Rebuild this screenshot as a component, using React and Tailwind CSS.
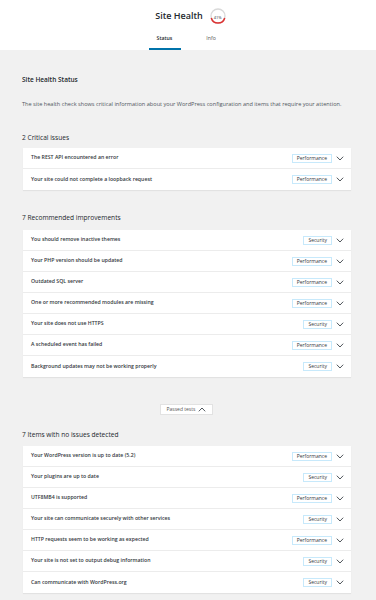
import React from "react";

const critical = [
  ["The REST API encountered an error", "Performance"],
  ["Your site could not complete a loopback request", "Performance"],
];

const recommended = [
  ["You should remove inactive themes", "Security"],
  ["Your PHP version should be updated", "Performance"],
  ["Outdated SQL server", "Performance"],
  ["One or more recommended modules are missing", "Performance"],
  ["Your site does not use HTTPS", "Security"],
  ["A scheduled event has failed", "Performance"],
  ["Background updates may not be working properly", "Security"],
];

const passed = [
  ["Your WordPress version is up to date (5.2)", "Performance"],
  ["Your plugins are up to date", "Security"],
  ["UTF8MB4 is supported", "Performance"],
  ["Your site can communicate securely with other services", "Security"],
  ["HTTP requests seem to be working as expected", "Performance"],
  ["Your site is not set to output debug information", "Security"],
  ["Can communicate with WordPress.org", "Security"],
];

function Chevron({ up = false }) {
  return (
    <svg width="8" height="5" viewBox="0 0 8 5" className="shrink-0">
      <path
        d={up ? "M0.8 4.3 L4 1 L7.2 4.3" : "M0.8 0.7 L4 4 L7.2 0.7"}
        fill="none"
        stroke="#3c434a"
        strokeWidth="0.9"
      />
    </svg>
  );
}

function Card({ items }) {
  return (
    <div className="ml-px bg-white shadow-[0_1px_1px_rgba(0,0,0,0.06)]">
      {items.map(([title, badge], i) => (
        <div
          key={title}
          className={`h-[21px] flex items-center pl-[8px] pr-[7px] ${
            i < items.length - 1 ? "border-b border-[#ececec]" : ""
          }`}
        >
          <span className="flex-1 text-[5.2px] font-semibold text-[#32373c] leading-none">{title}</span>
          <span className="h-[9px] px-[4px] flex items-center border border-[#c7e9fb] text-[5px] text-[#32373c] leading-none">
            {badge}
          </span>
          <span className="ml-[4px]">
            <Chevron />
          </span>
        </div>
      ))}
    </div>
  );
}

function Heading({ children, className = "" }) {
  return (
    <h2 className={`h-[10px] leading-[10px] text-[6.6px] text-[#23282d] ${className}`}>{children}</h2>
  );
}

export default function App() {
  return (
    <div className="w-[376px] min-h-[600px] bg-[#f1f1f1] font-['Open_Sans',sans-serif] text-[#23282d]">
      {/* HEADER */}
      <div className="h-[50px] bg-white flex flex-col">
        <div className="pt-[7px] h-[24px] flex items-center justify-center gap-[7px] pl-[5px]">
          <span className="text-[9px] font-semibold leading-none">Site Health</span>
          <div className="relative w-[16px] h-[16px]">
            <svg width="16" height="16" viewBox="0 0 16 16">
              <circle cx="8" cy="8" r="7" fill="none" stroke="#d9d9d9" strokeWidth="1.3" />
              <path d="M14.73 9.93 A7 7 0 0 1 1.27 9.93" fill="none" stroke="#dc3232" strokeWidth="1.5" />
            </svg>
            <span className="absolute inset-x-0 top-[8px] text-center text-[4px] leading-none text-[#23282d]">41%</span>
          </div>
        </div>
        <div className="mt-auto h-[20px] flex justify-center gap-[14px]">
          <div className="w-[32px] border-b-2 border-[#0073aa] flex items-center justify-center text-[5.2px] font-semibold">
            Status
          </div>
          <div className="w-[33px] border-b-2 border-transparent flex items-center justify-center text-[5.2px] text-[#555]">
            Info
          </div>
        </div>
      </div>

      {/* BODY */}
      <div className="pl-[22px] pr-[25px] pb-[8px]">
        <h1 className="mt-[25px] h-[10px] leading-[10px] text-[6.5px] font-semibold">Site Health Status</h1>
        <p className="mt-[15px] h-[8px] leading-[8px] text-[5.6px] text-[#50575e] whitespace-nowrap">
          The site health check shows critical information about your WordPress configuration and items that require your attention.
        </p>

        <Heading className="mt-[25px] mb-[5px]">2 Critical issues</Heading>
        <Card items={critical} />

        <Heading className="mt-[23px] mb-[7px]">7 Recommended improvements</Heading>
        <Card items={recommended} />

        <div className="mt-[27px] flex justify-center">
          <button className="w-[53px] h-[11px] bg-white border border-[#e2e2e2] flex items-center justify-center gap-[3px] text-[5px] text-[#555] leading-none">
            Passed tests
            <Chevron up />
          </button>
        </div>

        <Heading className="mt-[15px] mb-[6px]">7 Items with no issues detected</Heading>
        <Card items={passed} />
      </div>
    </div>
  );
}
